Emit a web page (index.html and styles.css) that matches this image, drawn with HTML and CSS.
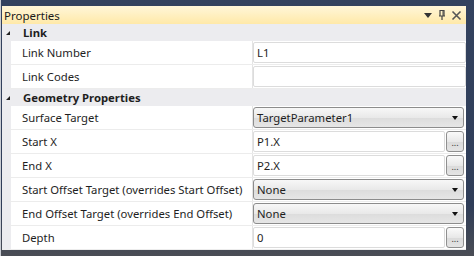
FILE: index.html
```html
<!DOCTYPE html>
<html>
<head>
<meta charset="utf-8">
<link rel="stylesheet" href="styles.css">
</head>
<body>
<div class="frame">
  <div class="panel">
    <div class="titlebar">
      <span class="title">Properties</span>
      <span class="tools">
        <svg class="ico" width="10" height="10" viewBox="0 0 10 10"><path d="M1 3 H9 L5 8 Z" fill="#333"/></svg>
        <svg class="ico" width="10" height="12" viewBox="0 0 10 12"><path d="M3 1.5 H7 V7 H3 Z M2 7 H8 M5 7 V11" fill="none" stroke="#444" stroke-width="1.2"/><path d="M6 1.5 V7" stroke="#444" stroke-width="1"/></svg>
        <svg class="ico" width="11" height="11" viewBox="0 0 11 11"><path d="M1.5 1.5 L9.5 9.5 M9.5 1.5 L1.5 9.5" stroke="#555" stroke-width="1.6"/></svg>
      </span>
    </div>
    <div class="grid">
      <div class="cat"><span class="gut"><span class="tri"></span></span><span class="cat-name">Link</span></div>
      <div class="row"><span class="gut"></span><span class="label">Link Number</span><span class="val"><span class="box">L1</span></span></div>
      <div class="row"><span class="gut"></span><span class="label">Link Codes</span><span class="val"><span class="box"></span></span></div>
      <div class="cat"><span class="gut"><span class="tri"></span></span><span class="cat-name">Geometry Properties</span></div>
      <div class="row"><span class="gut"></span><span class="label">Surface Target</span><span class="val"><span class="combo">TargetParameter1<span class="arrow"></span></span></span></div>
      <div class="row"><span class="gut"></span><span class="label">Start X</span><span class="val"><span class="box">P1.X</span><span class="btn">...</span></span></div>
      <div class="row"><span class="gut"></span><span class="label">End X</span><span class="val"><span class="box">P2.X</span><span class="btn">...</span></span></div>
      <div class="row"><span class="gut"></span><span class="label">Start Offset Target (overrides Start Offset)</span><span class="val"><span class="combo">None<span class="arrow"></span></span></span></div>
      <div class="row"><span class="gut"></span><span class="label">End Offset Target (overrides End Offset)</span><span class="val"><span class="combo">None<span class="arrow"></span></span></span></div>
      <div class="row last"><span class="gut"></span><span class="label">Depth</span><span class="val"><span class="box">0</span><span class="btn">...</span></span></div>
    </div>
  </div>
</div>
</body>
</html>
```
FILE: styles.css
```css
html, body {
  margin: 0;
  padding: 0;
  background: #3a4458;
}
.frame {
  width: 474px;
  height: 256px;
  box-sizing: border-box;
  padding: 6px 8px 6px 1px;
  background: linear-gradient(#33425f, #2f3d58 80%, #4a4d55);
  border-left: 1px solid #c9ccd2;
  font-family: "Noto Sans", "Open Sans", sans-serif;
  font-size: 11.3px;
  color: #1e1e1e;
}
.panel {
  height: 244px;
  background: #fff;
  display: flex;
  flex-direction: column;
}
.titlebar {
  height: 18px;
  flex: none;
  display: flex;
  align-items: center;
  justify-content: space-between;
  background: linear-gradient(#fff6d9, #ffe9a8);
  padding: 0 4px 0 2px;
}
.title {
  font-size: 11.5px;
  color: #1a1a1a;
}
.tools {
  display: flex;
  align-items: center;
  gap: 4px;
}
.ico { display: block; }
.grid {
  display: flex;
  flex-direction: column;
}
.cat {
  height: 17px;
  display: flex;
  align-items: center;
  background: #ececef;
}
.cat .gut {
  background: transparent;
}
.gut {
  width: 9px;
  align-self: stretch;
  flex: none;
  background: #ececef;
  display: flex;
  align-items: center;
  justify-content: center;
}
.tri {
  width: 0;
  height: 0;
  border-left: 4px solid transparent;
  border-bottom: 4px solid #222;
  margin-left: 2px;
}
.cat-name {
  font-weight: bold;
  padding-left: 12px;
}
.row {
  height: 24px;
  display: flex;
  align-items: stretch;
  border-bottom: 1px solid #ececec;
  box-sizing: border-box;
}
.label {
  width: 242px;
  flex: none;
  padding-left: 11px;
  display: flex;
  align-items: center;
  box-sizing: border-box;
  border-right: 1px solid #e4e4e4;
  white-space: nowrap;
}
.val {
  flex: 1;
  display: flex;
  align-items: stretch;
  padding: 1px 0 1px 0;
  gap: 1px;
}
.box {
  flex: 1;
  border: 1px solid #dcdcdc;
  border-radius: 2px;
  display: flex;
  align-items: center;
  padding-left: 3px;
  background: #fff;
}
.combo {
  flex: 1;
  margin-right: 2px;
  border: 1px solid #8c8c8c;
  border-radius: 3px;
  background: linear-gradient(#f7f7f7, #e9e9e9 50%, #dcdcdc 51%, #e6e6e6);
  display: flex;
  align-items: center;
  justify-content: space-between;
  padding: 0 5px 0 3px;
}
.arrow {
  width: 0;
  height: 0;
  border-left: 3.5px solid transparent;
  border-right: 3.5px solid transparent;
  border-top: 4px solid #111;
}
.btn {
  width: 18px;
  flex: none;
  margin-right: 2px;
  border: 1px solid #8f8f8f;
  border-radius: 3px;
  background: linear-gradient(#fafafa, #e8e8e8 50%, #dadada 51%, #e4e4e4);
  font-size: 9px;
  line-height: 1;
  color: #333;
  display: flex;
  align-items: flex-end;
  justify-content: center;
  padding-bottom: 4px;
  box-sizing: border-box;
}
```
